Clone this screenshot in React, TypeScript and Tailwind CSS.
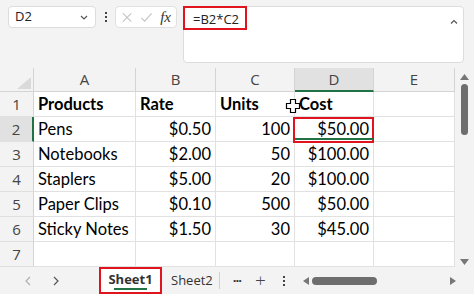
import React from 'react';

const cols = ['A', 'B', 'C', 'D', 'E'];

const rows = [
  ['Products', 'Rate', 'Units', 'Cost', ''],
  ['Pens', '$0.50', '100', '$50.00', ''],
  ['Notebooks', '$2.00', '50', '$100.00', ''],
  ['Staplers', '$5.00', '20', '$100.00', ''],
  ['Paper Clips', '$0.10', '500', '$50.00', ''],
  ['Sticky Notes', '$1.50', '30', '$45.00', ''],
  ['', '', '', '', ''],
];

const CrossCursor = () => (
  <svg width="16" height="16" viewBox="0 0 16 16" className="absolute left-[285px] top-[98px]">
    <path d="M5.5 1.5h5v4h4v5h-4v4h-5v-4h-4v-5h4z" fill="#fff" stroke="#000" strokeWidth="1.2" />
  </svg>
);

const App: React.FC = () => {
  return (
    <div className="w-[474px] h-[294px] overflow-hidden bg-[#f3f3f3] relative font-['Lato',sans-serif] text-black">
      {/* Formula bar */}
      <div className="h-[68px] flex items-start pt-[6px] px-[8px]">
        <div className="w-[88px] h-[22px] bg-white border border-[#dcdcdc] rounded-[4px] flex items-center justify-between px-[6px] font-['Open_Sans',sans-serif] text-[13px] text-[#222]">
          <span>D2</span>
          <svg width="10" height="10" viewBox="0 0 10 10"><path d="M2 4l3 3 3-3" fill="none" stroke="#555" strokeWidth="1.2" /></svg>
        </div>
        <div className="w-[19px] h-[22px] flex flex-col items-center justify-center gap-[2px]">
          <span className="w-[2px] h-[2px] bg-[#444]" />
          <span className="w-[2px] h-[2px] bg-[#444]" />
          <span className="w-[2px] h-[2px] bg-[#444]" />
        </div>
        <div className="w-[62px] h-[22px] bg-white border border-[#e0e0e0] rounded-[4px] flex items-center gap-[7px] px-[5px]">
          <svg width="13" height="13" viewBox="0 0 13 13"><path d="M2 2l9 9M11 2l-9 9" stroke="#c4c4c4" strokeWidth="1.2" /></svg>
          <svg width="14" height="13" viewBox="0 0 14 13"><path d="M1.5 7l3.5 3.5 7.5-8.5" fill="none" stroke="#c4c4c4" strokeWidth="1.2" /></svg>
          <span className="font-['Liberation_Serif',serif] italic text-[15px] leading-none text-[#333]">fx</span>
        </div>
        <div className="ml-[6px] w-[281px] h-[57px] bg-white border border-[#dcdcdc] rounded-[4px] relative">
          <div className="absolute left-[-1px] top-[-1px] w-[64px] h-[24px] border-[2px] border-[#e0141e]" />
          <div className="pl-[9px] pt-[3px] font-['Open_Sans',sans-serif] text-[13px] text-[#222]">=B2*C2</div>
          <svg width="10" height="10" viewBox="0 0 10 10" className="absolute right-[4px] top-[10px]"><path d="M2 6.5l3-3 3 3" fill="none" stroke="#555" strokeWidth="1.2" /></svg>
        </div>
      </div>

      {/* Grid */}
      <div className="flex">
        <div className="grid grid-cols-[34px_102px_80px_79px_79px_81px] grid-rows-[24px_repeat(7,25px)] bg-white">
          <div className="bg-[#f3f3f3] border-r border-b border-[#d4d4d4] flex items-end justify-end p-[2px]">
            <svg width="16" height="12" viewBox="0 0 16 12"><path d="M16 0v12H2z" fill="#dadada" /></svg>
          </div>
          {cols.map((c) => (
            <div
              key={c}
              className={`flex items-center justify-center font-['Open_Sans',sans-serif] text-[15px] text-[#444] border-r border-[#d4d4d4] ${c === 'D' ? 'bg-[#e1e1e1] border-b-2 border-b-[#217346]' : 'bg-[#f3f3f3] border-b border-b-[#d4d4d4]'}`}
            >
              {c}
            </div>
          ))}
          {rows.map((r, ri) => (
            <React.Fragment key={ri}>
              <div
                className={`flex items-center justify-center font-['Open_Sans',sans-serif] text-[15px] text-[#444] border-b border-[#e0e0e0] ${ri === 1 ? 'bg-[#e1e1e1] border-r-2 border-r-[#217346]' : 'bg-[#f3f3f3] border-r border-r-[#d4d4d4]'}`}
              >
                {ri + 1}
              </div>
              {r.map((v, ci) => (
                <div
                  key={ci}
                  className={`flex items-center px-[4px] text-[16.5px] border-r border-b border-[#e1e1e1] ${ri === 0 ? 'font-bold' : ''} ${ri > 0 && ci > 0 ? 'justify-end' : ''} ${ri === 1 && ci === 3 ? 'relative' : ''}`}
                >
                  {v}
                  {ri === 1 && ci === 3 && (
                    <>
                      <div className="absolute left-[-2px] top-[0px] right-[-1px] bottom-[-2px] border-[2px] border-[#e0141e]" />
                      <div className="absolute left-[0px] right-[0px] bottom-[1px] h-[2px] bg-[#217346]" />
                    </>
                  )}
                </div>
              ))}
            </React.Fragment>
          ))}
        </div>
        {/* Vertical scrollbar */}
        <div className="w-[19px] h-[199px] bg-[#f3f3f3] flex flex-col items-center pt-[6px]">
          <svg width="9" height="6" viewBox="0 0 9 6"><path d="M0 6L4.5 0 9 6z" fill="#777" /></svg>
          <div className="mt-[4px] w-[7px] h-[51px] rounded-full bg-[#6e6e6e]" />
          <div className="flex-1" />
          <svg width="9" height="6" viewBox="0 0 9 6" className="mb-[2px]"><path d="M0 0h9L4.5 6z" fill="#777" /></svg>
        </div>
      </div>

      {/* Sheet tabs */}
      <div className="h-[27px] flex items-center font-['Open_Sans',sans-serif] text-[13px] text-[#333]">
        <span className="ml-[24px] w-[8px]">
          <svg width="8" height="10" viewBox="0 0 8 10"><path d="M6 1L2 5l4 4" fill="none" stroke="#b0b0b0" strokeWidth="1.2" /></svg>
        </span>
        <span className="ml-[20px] w-[8px]">
          <svg width="8" height="10" viewBox="0 0 8 10"><path d="M2 1l4 4-4 4" fill="none" stroke="#555" strokeWidth="1.2" /></svg>
        </span>
        <div className="ml-[39px] w-[63px] h-[27px] bg-white border-[2px] border-[#e0141e] flex flex-col items-center justify-center">
          <span className="font-bold leading-[17px] text-[#333]">Sheet1</span>
          <span className="w-[33px] h-[2px] bg-[#217346]" />
        </div>
        <span className="ml-[9px]">Sheet2</span>
        <div className="ml-[6px] w-[1px] h-[17px] bg-[#d0d0d0]" />
        <span className="ml-[13px] font-bold tracking-[-1px] leading-none">···</span>
        <span className="ml-[14px] text-[19px] font-light leading-none text-[#444]">+</span>
        <div className="ml-[17px] flex flex-col gap-[2px]">
          <span className="w-[2px] h-[2px] bg-[#444]" />
          <span className="w-[2px] h-[2px] bg-[#444]" />
          <span className="w-[2px] h-[2px] bg-[#444]" />
        </div>
        <svg width="6" height="8" viewBox="0 0 6 8" className="ml-[18px]"><path d="M6 0v8L0 4z" fill="#777" /></svg>
        <div className="ml-[3px] w-[65px] h-[8px] rounded-full bg-[#6e6e6e]" />
        <div className="flex-1" />
        <svg width="6" height="8" viewBox="0 0 6 8" className="mr-[18px]"><path d="M0 0v8l6-4z" fill="#777" /></svg>
      </div>

      <CrossCursor />
    </div>
  );
};

export default App;
